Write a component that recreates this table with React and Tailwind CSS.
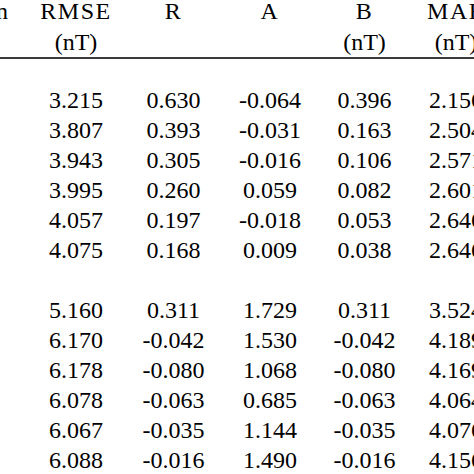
import React from "react";

const W = ["w-[27px]", "w-[98px]", "w-[97px]", "w-[96px]", "w-[93px]", "w-[90px]"];

const group1 = [
  ["3.215", "0.630", "-0.064", "0.396", "2.156"],
  ["3.807", "0.393", "-0.031", "0.163", "2.504"],
  ["3.943", "0.305", "-0.016", "0.106", "2.571"],
  ["3.995", "0.260", "0.059", "0.082", "2.601"],
  ["4.057", "0.197", "-0.018", "0.053", "2.646"],
  ["4.075", "0.168", "0.009", "0.038", "2.646"],
];

const group2 = [
  ["5.160", "0.311", "1.729", "0.311", "3.524"],
  ["6.170", "-0.042", "1.530", "-0.042", "4.189"],
  ["6.178", "-0.080", "1.068", "-0.080", "4.169"],
  ["6.078", "-0.063", "0.685", "-0.063", "4.064"],
  ["6.067", "-0.035", "1.144", "-0.035", "4.076"],
  ["6.088", "-0.016", "1.490", "-0.016", "4.156"],
];

function Row({ cells, first = "", h = "h-[30px]", head = false }) {
  return (
    <div className={`flex ${h} items-start whitespace-nowrap`}>
      <div className={`${W[0]} shrink-0 flex justify-end pr-[19px]`}>{first}</div>
      {cells.map((c, i) => (
        <div
          key={i}
          className={`${W[i + 1]} shrink-0 text-center ${head ? "tracking-[1.5px]" : ""}`}
        >
          {c}
        </div>
      ))}
    </div>
  );
}

export default function App() {
  return (
    <div
      className="w-[474px] h-[474px] overflow-hidden bg-white text-black text-[24px] leading-[30px]"
      style={{ fontFamily: '"Liberation Serif", "Times New Roman", serif' }}
    >
      <div className="-mt-[4px] w-[520px]">
        <Row h="h-[31px]" head first="n" cells={["RMSE", "R", "A", "B", "MAE"]} />
        <Row cells={["(nT)", "", "", "(nT)", "(nT)"]} />
        <div className="h-[2px] bg-[#3a3a3a]" />
        <div className="h-[26px]" />
        {group1.map((r, i) => (
          <Row key={i} cells={r} />
        ))}
        <div className="h-[30px]" />
        {group2.map((r, i) => (
          <Row key={i} cells={r} />
        ))}
      </div>
    </div>
  );
}
